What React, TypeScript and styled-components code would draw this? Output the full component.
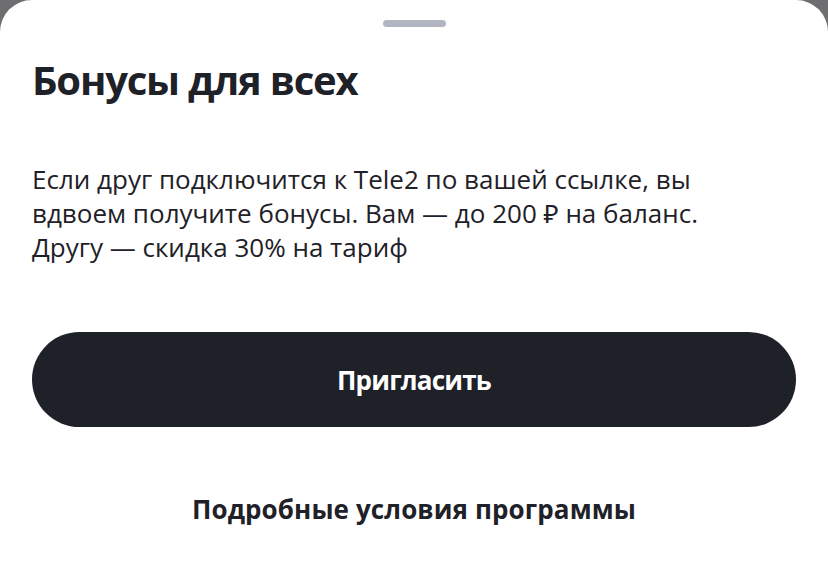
import React from "react";
import styled, { createGlobalStyle } from "styled-components";

const GlobalStyle = createGlobalStyle`
  html, body {
    margin: 0;
    padding: 0;
    background: #6e6e70;
  }
  body {
    font-family: "Open Sans", "Noto Sans", sans-serif;
  }
`;

const Sheet = styled.div`
  width: 828px;
  height: 573px;
  box-sizing: border-box;
  background: #ffffff;
  border-radius: 32px 32px 0 0;
  padding: 0 32px;
  display: flex;
  flex-direction: column;
  overflow: hidden;
`;

const Handle = styled.div`
  align-self: center;
  width: 63px;
  height: 7px;
  border-radius: 4px;
  background: #b3b6c2;
  margin-top: 20px;
`;

const Titulo = styled.h1`
  margin: 27px 0 0;
  font-size: 40px;
  line-height: 52px;
  font-weight: 700;
  color: #1f2128;
  letter-spacing: -1.2px;
`;

const Paragrafo = styled.p`
  margin: 56px 0 0;
  font-size: 26px;
  line-height: 34px;
  font-weight: 400;
  color: #1f2128;
  letter-spacing: 0;
`;

const Botao = styled.button`
  margin-top: 68px;
  height: 95px;
  width: 100%;
  flex-shrink: 0;
  border: none;
  border-radius: 48px;
  background: #1f2129;
  color: #ffffff;
  font-family: inherit;
  font-size: 26px;
  font-weight: 700;
  letter-spacing: -0.8px;
  cursor: pointer;
`;

const LinkCondicoes = styled.a`
  margin-top: 64px;
  align-self: center;
  font-size: 26px;
  font-weight: 700;
  color: #1f2128;
  text-decoration: none;
  letter-spacing: 0.1px;
`;

const App = () => {
  return (
    <>
      <GlobalStyle />
      <Sheet>
        <Handle />
        <Titulo>Бонусы для всех</Titulo>
        <Paragrafo>
          Если друг подключится к Tele2 по вашей ссылке, вы
          <br />
          вдвоем получите бонусы. Вам — до 200 ₽ на баланс.
          <br />
          Другу — скидка 30% на тариф
        </Paragrafo>
        <Botao type="button">Пригласить</Botao>
        <LinkCondicoes href="#">Подробные условия программы</LinkCondicoes>
      </Sheet>
    </>
  );
};

export default App;
